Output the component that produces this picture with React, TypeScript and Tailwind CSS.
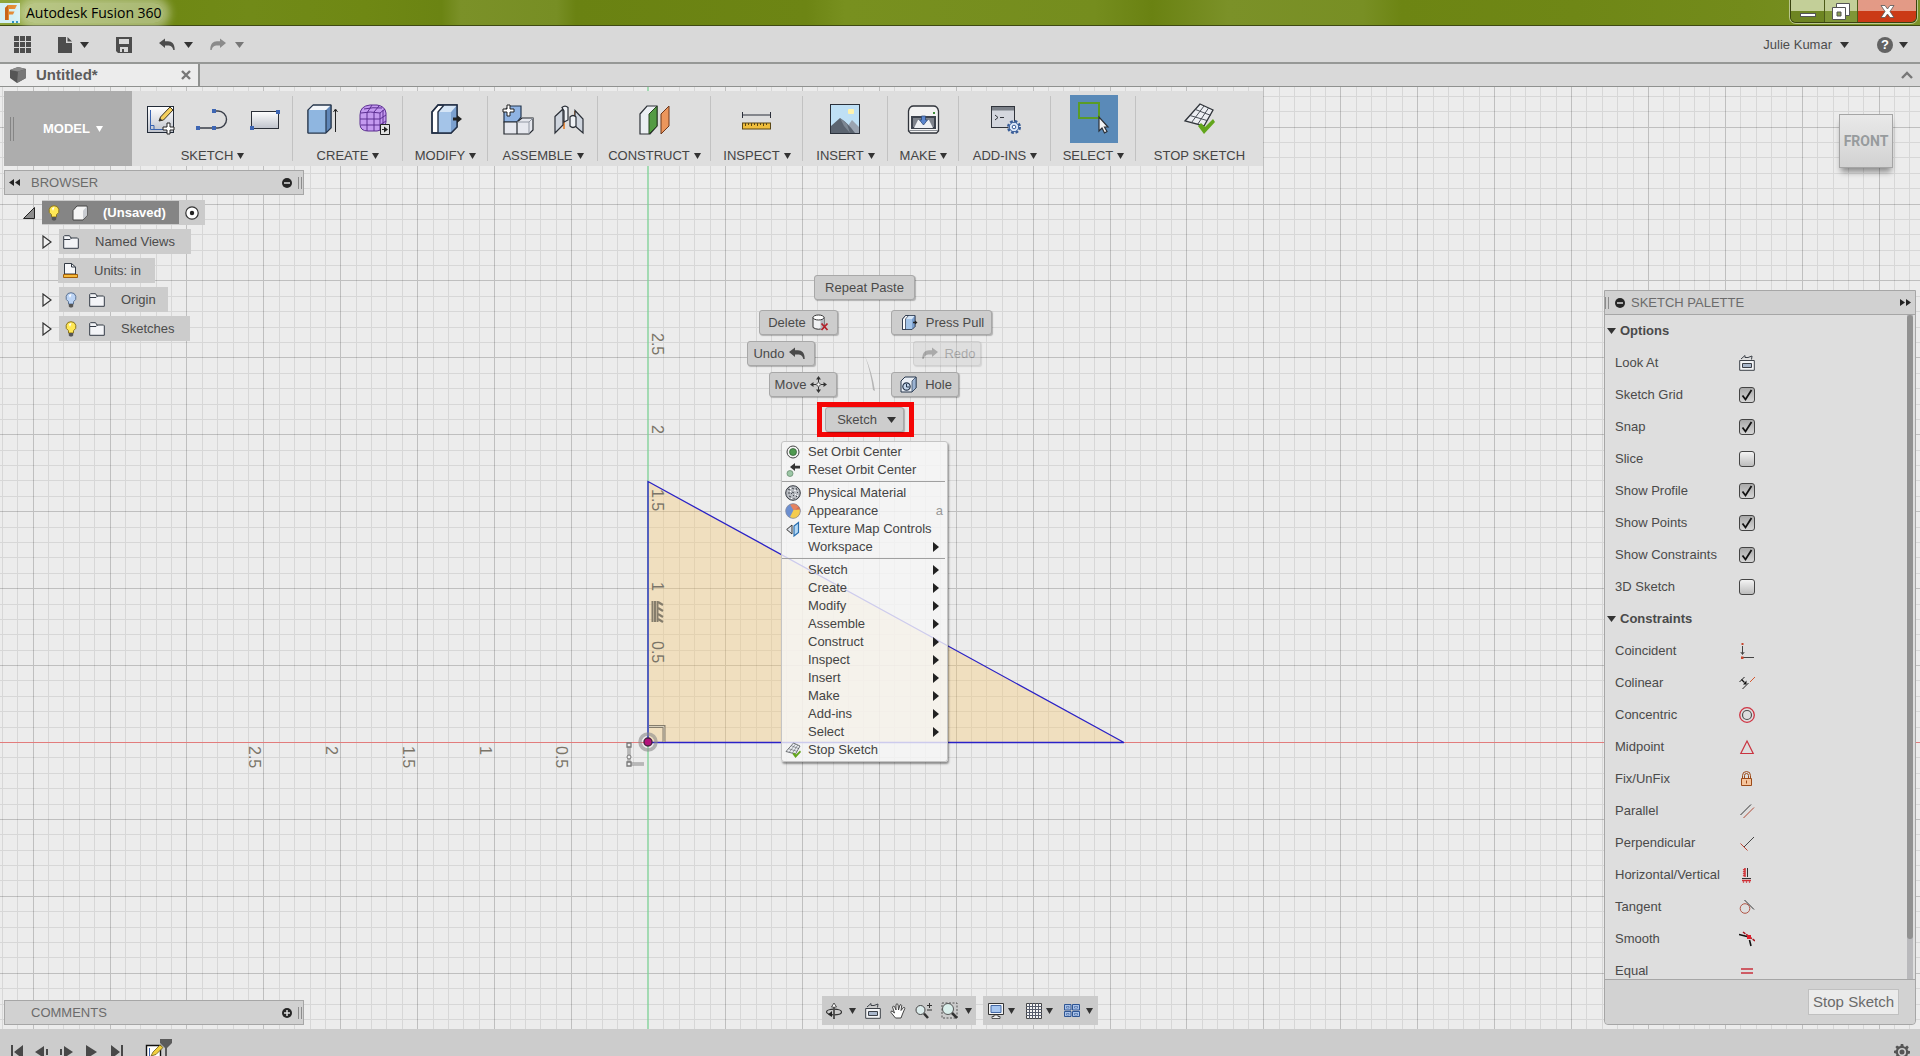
import { useState } from 'react';
import type { ReactNode } from 'react';

// Sketch origin on the canvas and the grid pitch (5 minor cells per major one)
const ORIGIN_X = 648;
const ORIGIN_Y = 655;
const MAJOR = 76.92;
const MINOR = MAJOR / 5;

interface ToolGroup {
  label: string;
  width: string;
  icons: ReactNode[];
  menu?: boolean;
  active?: boolean;
}

interface MenuItem {
  label: string;
  icon?: ReactNode;
  hint?: string;
  submenu?: boolean;
}

function gridPath(step: number, from: number, to: number, skip: (i: number) => boolean) {
  let d = '';
  for (let i = from; i <= to; i++) {
    if (skip(i)) continue;
    d += `M${Math.round(ORIGIN_X + i * step)}.5 0v3000`;
    d += `M0 ${Math.round(ORIGIN_Y + i * step)}.5h4000`;
  }
  return d;
}

const minorLines = gridPath(MINOR, -45, 215, (i) => i % 5 === 0);
const majorLines = gridPath(MAJOR, -9, 43, (i) => i === 0);

const xLabels = [
  { text: '2.5', x: 249 },
  { text: '2', x: 326 },
  { text: '1.5', x: 403 },
  { text: '1', x: 480 },
  { text: '0.5', x: 556 },
];

const yLabels = [
  { text: '2.5', y: 246 },
  { text: '2', y: 338 },
  { text: '1.5', y: 402 },
  { text: '1', y: 495 },
  { text: '0.5', y: 554 },
];

function Caret({ className = 'text-[#333]', small = false }: { className?: string; small?: boolean }) {
  return small ? (
    <svg width="7" height="6" viewBox="0 0 7 6" className={className}>
      <path d="M0 0h7L3.500 6z" fill="currentColor" />
    </svg>
  ) : (
    <svg width="9" height="6" viewBox="0 0 9 6" className={className}>
      <path d="M0 0h9L4.500 6z" fill="currentColor" />
    </svg>
  );
}

function UndoIcon({ flip = false }: { flip?: boolean }) {
  return (
    <svg width="16" height="13" viewBox="0 0 16 13">
      <path
        d="M0 5 6 .5v2.800h3C13 3.300 15.700 6 15.700 12h-1.400C13.500 8.500 11.500 7.500 9 7.500H6V10z"
        fill="currentColor"
        transform={flip ? 'matrix(-1 0 0 1 16 0)' : undefined}
      />
    </svg>
  );
}

function Logo() {
  return (
    <svg width="20" height="20" viewBox="0 0 20 20">
      <rect width="20" height="20" fill="#d4f0f4" />
      <path d="M5 17V5l3-3h9l-2 4H9v2.500h5.500l-1.500 3H9V17z" fill="#e48a33" />
      <path d="M5 17V5l3-3v15z" fill="#c8651a" />
      <path d="M12 18v2h2v-2zM16 18v2h2v-2z" fill="#2b8fc4" />
    </svg>
  );
}

function PencilSketchIcon() {
  return (
    <svg width="34" height="34" viewBox="0 0 34 34">
      <defs>
        <linearGradient id="paper" x1="0" y1="0" x2="0" y2="1">
          <stop offset="0" stopColor="#fff" />
          <stop offset="1" stopColor="#bfc3cc" />
        </linearGradient>
      </defs>
      <rect x="3.500" y="4.500" width="26" height="26" fill="url(#paper)" stroke="#222b38" />
      <path d="M6.500 8v19.500H25M6.500 23.500h3.500v3.500" fill="none" stroke="#3a64b0" />
      <path d="m15 19 1.500-4L26 5l3 3-9.500 10z" fill="#f4cf5d" stroke="#3d3420" />
      <path d="m15 19 1-3 2.500 2.500z" fill="#333" />
      <path d="M23 21h3v4h4v3h-4v4h-3v-4h-4v-3h4z" fill="#fff" stroke="#222" />
    </svg>
  );
}

function ArcIcon() {
  return (
    <svg width="34" height="34" viewBox="0 0 34 34">
      <path d="M3 26h15.500M18 9h4a8.500 8.500 0 0 1 0 17h-4" fill="none" stroke="#3a3f4a" strokeWidth="1.400" />
      <path d="M0 24h4v4H0zM16 24h4v4h-4zM16 7h4v4h-4z" fill="#3e66b3" />
    </svg>
  );
}

function RectIcon() {
  return (
    <svg width="34" height="34" viewBox="0 0 34 34">
      <rect x="3.500" y="9.500" width="27" height="17" fill="url(#paper)" stroke="#2b3038" />
      <path d="M28 8h4v4h-4zM2 24h4v4H2z" fill="#3e66b3" />
    </svg>
  );
}

function ExtrudeIcon() {
  return (
    <svg width="34" height="34" viewBox="0 0 34 34">
      <path d="m3 8 5-5h18v23l-5 5H3z" fill="#f3f6fa" stroke="#27374d" strokeLinejoin="round" />
      <path d="M3 8h18v23H3z" fill="#8fb6e0" />
      <path d="m21 8 5-5v23l-5 5z" fill="#5f86b8" />
      <path d="m3 8 5-5h18v23l-5 5H3zM21 8v23" fill="none" stroke="#27374d" strokeWidth="1.200" />
      <path d="M30.500 30V8M28.500 10l2-3 2 3" fill="none" stroke="#222" />
    </svg>
  );
}

function FormIcon() {
  return (
    <svg width="34" height="34" viewBox="0 0 34 34">
      <path d="M3 13q0-9 10-10h7q8 1 9 8v9q-1 8-9 9h-9q-8 0-8-7z" fill="#c49af0" stroke="#5c2f92" />
      <path
        d="M4 11q9-2 19 0l5-4M3 17h20l6-4M4 23h19l6-4M10 29V11l5-8M17 29V10l5-6M23 28V11M7 7q9-2 18-1M26 25V8"
        fill="none"
        stroke="#5c2f92"
      />
      <path d="M23.500 22.500h9v10h-9z" fill="#e2e2e2" stroke="#222" />
      <path d="M25 27h2v-2.500l4 3-4 3V28h-2z" fill="#222" />
    </svg>
  );
}

function PressPullIcon({ size = 34 }: { size?: number }) {
  return (
    <svg width={size} height={size} viewBox="0 0 34 34">
      <path d="m3 10 6-7h19v22l-6 6H3z" fill="#fff" stroke="#222f45" strokeWidth="1.400" />
      <path d="M9 10h13v21H9z" fill="#a4c4e8" />
      <path d="m9 10 6-7h13l-6 7z" fill="#d5e5f6" />
      <path d="m22 10 6-7v22l-6 6z" fill="#7ba0cf" />
      <path d="m3 10 6-7h19v22l-6 6H3zM9 31V10l6-7" fill="none" stroke="#222f45" strokeWidth="1.400" />
      <path d="M24 15.500h4V13l5 4-5 4v-2.500h-4z" fill="#222" />
    </svg>
  );
}

function ComponentIcon() {
  return (
    <svg width="34" height="34" viewBox="0 0 34 34">
      <path d="m4 9 5-5h12v11l-4 5H4z" fill="#8fb3e3" stroke="#24364f" strokeWidth="1.200" />
      <path d="M4 20h13v12H4zM17 20l5-4h11v12l-4 4H17z" fill="#e6e8ee" stroke="#24282f" strokeWidth="1.200" />
      <path d="M17 20h12v12M29 20l4-4" fill="none" stroke="#9298a3" />
      <path d="M7 3h3v4h4v3h-4v4H7v-4H3V7h4z" fill="#fff" stroke="#222" />
    </svg>
  );
}

function JointIcon() {
  return (
    <svg width="34" height="34" viewBox="0 0 34 34">
      <path d="M12 18v9M23 9v9" stroke="#e57a24" strokeWidth="1.600" />
      <path d="M3 14.500 11 7v16l-8 8z" fill="#cfd5de" stroke="#292e36" strokeWidth="1.200" />
      <path d="M10 5.500q3-3 6 0V18l-4 2V9z" fill="#eef1f5" stroke="#292e36" strokeWidth="1.200" />
      <path d="M23 8.500 31 17v14l-8-7z" fill="#cfd5de" stroke="#292e36" strokeWidth="1.200" />
      <path d="M18 15q3-3 6 0v9q-3 3-6 0z" fill="#eef1f5" stroke="#292e36" strokeWidth="1.200" />
    </svg>
  );
}

function PlanesIcon() {
  return (
    <svg width="34" height="34" viewBox="0 0 34 34">
      <path d="m2 12 7-8h10v20l-7 8H2z" fill="#eceff3" stroke="#2c3036" strokeWidth="1.200" />
      <path d="m11 12 8-8v20l-8 8z" fill="#549b44" stroke="#27421f" />
      <path d="m23 12 8-8v20l-8 8z" fill="#eb965c" stroke="#6e371a" />
    </svg>
  );
}

function RulerIcon() {
  return (
    <svg width="34" height="34" viewBox="0 0 34 34">
      <path d="M2.500 10v6M30.500 10v6M3 13h27" stroke="#2b2f3a" fill="none" />
      <rect x="2.500" y="21" width="28" height="6" fill="#efbd3c" stroke="#5b4714" />
      <path d="M5.500 21v3m3-3v2m3-2v3m3-3v2m3-2v3m3-3v2m3-2v3m3-3v2" stroke="#5b4714" />
    </svg>
  );
}

function ImageIcon() {
  return (
    <svg width="34" height="34" viewBox="0 0 34 34">
      <rect x="1.500" y="2.500" width="29" height="29" fill="#bfe0f5" stroke="#2b313b" />
      <rect x="19" y="7" width="6" height="5" rx="1" fill="#fff3ae" />
      <path d="m14 31 9-13 7 7v6z" fill="#9aa3b0" />
      <path d="m2 24 9-8q8 5 15 15H2z" fill="#5b6470" />
      <path d="m11 16 7 6 3 9-6-7z" fill="#7d8793" />
    </svg>
  );
}

function PrinterIcon() {
  return (
    <svg width="34" height="34" viewBox="0 0 34 34">
      <path d="M1.500 9q1-5 5-5h20q4 0 5 5v20l-2 2h-26l-2-2z" fill="#f2f2f2" stroke="#30343b" strokeWidth="1.300" />
      <path d="M4 14h25v13H4z" fill="#3d434d" />
      <path d="M6 16h21v9H6z" fill="#7d828b" />
      <path d="M11 18h11l4 8H7z" fill="#eef0f3" />
      <path d="M14.500 14h4v4h2l-4 5-4-5h2z" fill="#5b86cf" stroke="#27406c" strokeWidth=".7" />
      <path d="M26 10h2v2h-2z" fill="#3f8c3a" />
      <path d="M2 28.500h29" stroke="#8a8e94" />
    </svg>
  );
}

function ScriptIcon() {
  return (
    <svg width="34" height="34" viewBox="0 0 34 34">
      <rect x="3.500" y="4.500" width="23" height="21" fill="#d4d7de" stroke="#30343b" />
      <path d="M4 5h22v3.500H4z" fill="#7b8088" />
      <path d="m7 13 3 2.500L7 18M12 15.500h4" fill="none" stroke="#30343b" />
      <circle cx="26" cy="25" r="5.500" fill="#e4ecf8" stroke="#385c97" strokeWidth="3" strokeDasharray="2.600 1.700" />
      <circle cx="26" cy="25" r="4.700" fill="#dce7f7" stroke="#385c97" />
      <circle cx="26" cy="25" r="1.800" fill="#fff" stroke="#385c97" />
    </svg>
  );
}

function SelectIcon() {
  return (
    <svg width="48" height="48" viewBox="0 0 48 48">
      <rect x="9" y="8" width="20" height="15" fill="none" stroke="#5a9c27" strokeWidth="2" />
      <path d="M29 22v14l3-3 2.500 5 2.500-1.500-2.500-4.500H38z" fill="#f3f4f6" stroke="#2b2f36" strokeWidth="1.200" />
    </svg>
  );
}

function StopSketchIcon({ size = 34 }: { size?: number }) {
  return (
    <svg width={size} height={size} viewBox="0 0 34 34">
      <path d="m17 2 13 6-9 16L2 19z" fill="#eceef2" stroke="#2f3339" strokeWidth="1.300" />
      <path d="m12.500 7.500 15.500 6M7 13.500l17 5M21 4 8.500 20.500M25.500 6 14.500 22.500" fill="none" stroke="#4a4f57" />
      <path d="m15 24 3-3 4 4 8-8 2 3-11 12z" fill="#62a51c" />
    </svg>
  );
}

function BulbIcon({ on = true }: { on?: boolean }) {
  return (
    <svg width="12" height="16" viewBox="0 0 12 16">
      <path
        d="M6 .7a4.800 4.800 0 0 0-2.500 9V12h5V9.700A4.800 4.800 0 0 0 6 .7z"
        fill={on ? '#ffe855' : '#bcd4f5'}
        stroke={on ? '#8a7420' : '#5d7493'}
      />
      <path d="M4 3.500q1-1.500 2.500-1.300L5 6z" fill="#fff" />
      <path d="M3.800 12h4.400v2.500L7 15.500H5l-1.200-1z" fill="#555" />
    </svg>
  );
}

function FolderIcon() {
  return (
    <svg width="16" height="14" viewBox="0 0 16 14">
      <path d="M.700 13.300V1.500L1.500.700h5L8 3h6.500l.800.800v9.500z" fill="#f3f4f7" stroke="#333a45" />
      <path d="M1 4.500h6L8.500 3" fill="none" stroke="#333a45" />
    </svg>
  );
}

function BodyIcon() {
  return (
    <svg width="16" height="16" viewBox="0 0 16 16">
      <path d="M1 5.500 5 1h10v9.500L11 15H1z" fill="#f5f5f5" stroke="#444" strokeLinejoin="round" />
      <path d="m11 5.500 4-4V10l-4 4.500z" fill="#c9ccd1" />
    </svg>
  );
}

function UnitsIcon() {
  return (
    <svg width="15" height="17" viewBox="0 0 15 17">
      <path d="M1.500 12V1.500h7L12.500 5v7z" fill="#f6f7f9" stroke="#333a45" />
      <path d="M8.500 1.500V5h4" fill="none" stroke="#333a45" />
      <path d="M.500 12.500h14v3H.500z" fill="#f5b93a" stroke="#a15f0b" />
    </svg>
  );
}

function LookAtIcon() {
  return (
    <svg width="16" height="16" viewBox="0 0 16 16">
      <path d="M.700 5.500h14.600v9.800H.700z" fill="#f4f5f7" stroke="#3c4148" />
      <path d="M3.500 8.500h9v4h-9z" fill="#aab8cc" stroke="#3c4148" />
      <path d="m2 4 4-3.500V2.500h3l4-1.500-.500 3.500" fill="none" stroke="#3c4148" />
    </svg>
  );
}

function Collapse({ plus = false }: { plus?: boolean }) {
  return (
    <svg width="10" height="10" viewBox="0 0 10 10">
      <circle cx="5" cy="5" r="5" fill="#262626" />
      <path d={plus ? 'M2 5h6M5 2v6' : 'M2 5h6'} stroke="#ddd" strokeWidth="1.500" />
    </svg>
  );
}

function Grip() {
  return <span className="h-3 w-1 border-x border-[#8c8c8c]" />;
}

const toolGroups: ToolGroup[] = [
  { label: 'SKETCH', width: 'w-[161px]', icons: [<PencilSketchIcon />, <ArcIcon />, <RectIcon />] },
  { label: 'CREATE', width: 'w-[110px]', icons: [<ExtrudeIcon />, <FormIcon />] },
  { label: 'MODIFY', width: 'w-[85px]', icons: [<PressPullIcon />] },
  { label: 'ASSEMBLE', width: 'w-[110px]', icons: [<ComponentIcon />, <JointIcon />] },
  { label: 'CONSTRUCT', width: 'w-[113px]', icons: [<PlanesIcon />] },
  { label: 'INSPECT', width: 'w-[92px]', icons: [<RulerIcon />] },
  { label: 'INSERT', width: 'w-[85px]', icons: [<ImageIcon />] },
  { label: 'MAKE', width: 'w-[71px]', icons: [<PrinterIcon />] },
  { label: 'ADD-INS', width: 'w-[92px]', icons: [<ScriptIcon />] },
  { label: 'SELECT', width: 'w-[85px]', icons: [<SelectIcon />], active: true },
  { label: 'STOP SKETCH', width: 'w-[127px]', icons: [<StopSketchIcon />], menu: false },
];

const menuSections: MenuItem[][] = [
  [
    {
      label: 'Set Orbit Center',
      icon: (
        <svg width="14" height="14" viewBox="0 0 14 14">
          <circle cx="7" cy="7" r="6" fill="#f4f4f4" stroke="#444" />
          <circle cx="7" cy="7" r="3.500" fill="#4f9a50" stroke="#2f5a30" strokeWidth=".7" />
        </svg>
      ),
    },
    {
      label: 'Reset Orbit Center',
      icon: (
        <svg width="14" height="14" viewBox="0 0 14 14">
          <path d="m4 4 5-4v2.800h5v2.700H9V8z" fill="#333" />
          <circle cx="4" cy="10.500" r="3" fill="#9dc7a6" stroke="#5d8466" strokeWidth=".7" />
        </svg>
      ),
    },
  ],
  [
    {
      label: 'Physical Material',
      icon: (
        <svg width="16" height="16" viewBox="0 0 16 16">
          <circle cx="8" cy="8" r="7.300" fill="#b9bcc2" stroke="#33373e" />
          <path d="m3 4 2 1M7 3l2 1M11 3l1 2M3 8h2M7 7l2 1M12 8l1-1M4 11l2 1M8 11l1-1M11 12l1-1M9 13v1M6 9l1-1" stroke="#44484f" />
          <path d="m5 3 1 1M9 5l2 1M5 6l1 1M10 9l1 1M6 13l1 1M12 10l1 1" stroke="#fff" />
        </svg>
      ),
    },
    {
      label: 'Appearance',
      hint: 'a',
      icon: (
        <svg width="16" height="16" viewBox="0 0 16 16">
          <circle cx="8" cy="8" r="7.500" fill="#6c8fd0" />
          <path d="M9 8 5 1.500Q11-1 14 4z" fill="#e5825f" />
          <path d="M9 8l5-4.500Q17 9 13 13.500z" fill="#dd6a48" />
          <path d="M8.500 7 15 6.500Q16 12 11 15q-4 1-6-1z" fill="#f4cc4d" />
          <circle cx="8" cy="8" r="7.300" fill="none" stroke="#8a8a90" strokeWidth=".6" />
        </svg>
      ),
    },
    {
      label: 'Texture Map Controls',
      icon: (
        <svg width="14" height="16" viewBox="0 0 14 16">
          <path d="M.700 8.500 6 4v9z" fill="#dfe3ea" stroke="#333" />
          <path d="M8 5 12.500 1.500v10L8 15z" fill="#b3d8f4" stroke="#2a6fb0" strokeWidth="1.200" />
        </svg>
      ),
    },
    { label: 'Workspace', submenu: true },
  ],
  [
    { label: 'Sketch', submenu: true },
    { label: 'Create', submenu: true },
    { label: 'Modify', submenu: true },
    { label: 'Assemble', submenu: true },
    { label: 'Construct', submenu: true },
    { label: 'Inspect', submenu: true },
    { label: 'Insert', submenu: true },
    { label: 'Make', submenu: true },
    { label: 'Add-ins', submenu: true },
    { label: 'Select', submenu: true },
    { label: 'Stop Sketch', icon: <StopSketchIcon size={17} /> },
  ],
];

const constraints: { label: string; icon: ReactNode }[] = [
  {
    label: 'Coincident',
    icon: (
      <>
        <path d="M3.500 3v8M1.800 9l1.700 2.500L5.200 9M4 14.500h11" stroke="#444" />
        <path d="M2.500 0h2v2h-2zM2 13.500h2.500V16H2z" fill="#c8452c" stroke="none" />
      </>
    ),
  },
  {
    label: 'Colinear',
    icon: (
      <>
        <path d="m.500 7 5-5M3.500 14l6-6" stroke="#222" />
        <path d="m11 7 5-5" stroke="#d4572f" />
        <path d="m2.500 4.500 3 3" stroke="#111" strokeWidth="1.300" />
        <path d="M7.500 9.500H4l3.500-4z" fill="#111" stroke="none" />
      </>
    ),
  },
  {
    label: 'Concentric',
    icon: (
      <>
        <circle cx="8" cy="8" r="7.300" stroke="#cf3342" strokeWidth="1.300" />
        <circle cx="8" cy="8" r="4.500" stroke="#4e4e4e" strokeWidth="1.200" />
      </>
    ),
  },
  { label: 'Midpoint', icon: <path d="m8 2 6.200 12.500H1.800z" stroke="#c93440" strokeWidth="1.200" /> },
  {
    label: 'Fix/UnFix',
    icon: (
      <>
        <path d="M2.500 7.500h10v7h-10z" fill="#f5c49c" stroke="#9c4a18" />
        <path d="M3.500 7.500V4.500a4 4 0 0 1 8 0v3M5.500 7.500v-3a2 2 0 0 1 4 0v3" stroke="#9c4a18" />
        <path d="M7.500 9.500v3" stroke="#9c4a18" />
      </>
    ),
  },
  {
    label: 'Parallel',
    icon: (
      <>
        <path d="M1.500 12 12 1.500" stroke="#333" />
        <path d="M4.500 15 15 4.500" stroke="#b04a35" />
      </>
    ),
  },
  {
    label: 'Perpendicular',
    icon: (
      <>
        <path d="M5 12 15 2" stroke="#444" />
        <path d="m1.500 8.500 7 7" stroke="#bf4432" />
      </>
    ),
  },
  {
    label: 'Horizontal/Vertical',
    icon: (
      <>
        <path d="M8.500 1v9M3 11.500h9" stroke="#333" />
        <path d="M6 1v9M3 13.500h9" stroke="#cf2f35" strokeWidth="1.500" />
        <path d="m4 3 2-1m-2 3 2-1m-2 3 2-1m-2 3 2-1M4 15.500l1-1m2 1 1-1m2 1 1-1" stroke="#cf2f35" strokeWidth="1.200" />
      </>
    ),
  },
  {
    label: 'Tangent',
    icon: (
      <>
        <circle cx="6" cy="9.500" r="4.800" stroke="#b05546" />
        <path d="m5.500 1 9.500 9.500" stroke="#333" />
      </>
    ),
  },
  {
    label: 'Smooth',
    icon: (
      <>
        <path d="m0 3.500 8 2M10.500 9l1.500 6" stroke="#111" strokeWidth="1.600" />
        <path d="m4 1 12 9" stroke="#a5121c" strokeWidth="1.500" strokeDasharray="3 1" />
        <path d="M8 4h4v4H8z" fill="#e01e2b" stroke="none" />
      </>
    ),
  },
  { label: 'Equal', icon: <path d="M2 6h12M2 10h12" stroke="#c9303c" strokeWidth="1.300" /> },
];

function TitleBar() {
  return (
    <header className="flex h-[26px] shrink-0 items-center justify-between border-b border-[#3f4a12] bg-[linear-gradient(90deg,#8fa63c_0%,#6f8814_9%,#718a18_13%,#6f8814_19%,#6b8413_23%,#7b9128_24%,#778e24_29%,#6a8212_30%,#6d8514_42%,#78901f_44%,#758d1e_57%,#6a8212_60%,#7b9128_64%,#788f24_71%,#6d8513_73%,#6f8716_82%,#738b1b_91%,#7b9328_100%)]">
      <div className="flex h-full items-center gap-1">
        <Logo />
        <h1 className="rounded-full bg-white/40 px-0.5 font-['Open_Sans','Noto_Sans',sans-serif] text-sm text-black shadow-[0_0_8px_6px_rgba(255,255,255,0.4)]">
          Autodesk Fusion 360
        </h1>
      </div>
      <div className="mr-[3px] flex h-[23px] self-start overflow-hidden rounded-b-md border border-t-0 border-[#39430f] shadow-[0_0_0_1px_rgba(255,255,255,0.5)]">
        <button aria-label="Minimize" className="flex w-[34px] items-end justify-center border-r border-[#4c5a18] bg-linear-to-b from-[#c3cf98] from-50% to-[#6e8522] to-50% pb-[5px]">
          <span className="h-1 w-4 border border-[#555] bg-white" />
        </button>
        <button aria-label="Restore" className="flex w-[33px] items-center justify-center border-r border-[#4c5a18] bg-linear-to-b from-[#c3cf98] from-50% to-[#7f9636] to-50%">
          <svg width="18" height="17" viewBox="0 0 18 17">
            <path d="M4.500.500h13v12h-13z" fill="#fff" stroke="#555" />
            <path d="M.500 4.500h13v12H.500z" fill="#fff" stroke="#555" />
            <path d="M5 9h4v4H5z" fill="#8a9c50" stroke="#555" />
          </svg>
        </button>
        <button aria-label="Close" className="flex w-[58px] items-center justify-center bg-linear-to-b from-[#e39a86] from-50% to-[#cb3a16] to-50%">
          <svg width="15" height="13" viewBox="0 0 15 13">
            <path d="M1 .500h4l2.500 3.500L10 .500h4l-4 6 4 6h-4L7.500 9 5 12.500H1l4-6z" fill="#fff" stroke="#555" strokeWidth=".8" />
          </svg>
        </button>
      </div>
    </header>
  );
}

function QuickAccess() {
  return (
    <div className="flex h-[38px] shrink-0 items-center justify-between border-b-2 border-[#969896] bg-[#d9d9d9] px-3 pt-px text-[#4d4d4d]">
      <div className="flex items-center gap-[27px] pl-0.5">
        <button aria-label="Data panel">
          <svg width="17" height="17" viewBox="0 0 17 17" fill="currentColor">
            <path d="M0 0h5v5H0zM6 0h5v5H6zM12 0h5v5h-5zM0 6h5v5H0zM6 6h5v5H6zM12 6h5v5h-5zM0 12h5v5H0zM6 12h5v5H6zM12 12h5v5h-5z" />
          </svg>
        </button>
        <button aria-label="File" className="flex items-center gap-2">
          <svg width="14" height="16" viewBox="0 0 14 16" fill="currentColor">
            <path d="M0 0h8v6h6v10H0z" />
            <path d="M9.500 0 14 4.500H9.500z" />
          </svg>
          <Caret />
        </button>
        <button aria-label="Save">
          <svg width="16" height="16" viewBox="0 0 16 16">
            <path d="M0 0h16v16H2l-2-2z" fill="currentColor" />
            <path d="M3 2h10v5H3zM4 10h8v5H4z" fill="#d9d9d9" />
            <path d="M6 12h2v3H6z" fill="currentColor" />
          </svg>
        </button>
        <div className="flex gap-[17px]">
          <button aria-label="Undo" className="flex items-center gap-[9px]">
            <UndoIcon />
            <Caret />
          </button>
          <button aria-label="Redo" className="flex items-center gap-[9px] text-[#8b8b8b]">
            <UndoIcon flip />
            <Caret className="text-[#777]" />
          </button>
        </div>
      </div>
      <div className="flex items-center gap-7">
        <button className="flex items-center gap-2">
          Julie Kumar
          <Caret />
        </button>
        <button aria-label="Help" className="flex items-center gap-1.5">
          <span className="flex size-4 items-center justify-center rounded-full bg-[#636363] text-[13px] font-bold text-white">?</span>
          <Caret />
        </button>
      </div>
    </div>
  );
}

function TabBar() {
  return (
    <div className="flex h-[23px] shrink-0 items-center justify-between border-b border-[#8f918f] bg-[#d9d9d9] pr-[7px]">
      <div className="flex h-full w-[200px] items-center border-r-2 border-[#8f918f] bg-[#ececec] pr-[7px] pl-[10px]">
        <svg width="16" height="16" viewBox="0 0 16 16">
          <path d="M0 3 8 0l8 2v9l-9 5-7-5z" fill="#555" />
          <path d="m0 3 8 1.500L16 2 8 0z" fill="#8a8a8a" />
          <path d="M8 4.500 16 2v9l-9 5z" fill="#777" />
        </svg>
        <span className="ml-[10px] flex-1 text-[15px] font-bold text-[#5c5c5c]">Untitled*</span>
        <button aria-label="Close tab">
          <svg width="10" height="10" viewBox="0 0 10 10">
            <path d="m1 1 8 8M9 1 1 9" stroke="#777" strokeWidth="2.400" />
          </svg>
        </button>
      </div>
      <button aria-label="Collapse">
        <svg width="12" height="8" viewBox="0 0 12 8">
          <path d="m1 7 5-5 5 5" fill="none" stroke="#777" strokeWidth="2.400" />
        </svg>
      </button>
    </div>
  );
}

function Toolbar() {
  return (
    <nav className="flex h-[75px] self-start bg-[#dedede]">
      <button className="flex w-32 items-center bg-[#adadad] pl-1.5 text-[13px] font-bold text-white">
        <span className="h-6 w-1 border-x border-[#858585]" />
        <span className="flex flex-1 items-center justify-center gap-1.5">
          MODEL
          <Caret small className="text-white" />
        </span>
      </button>
      {toolGroups.map((group, i) => (
        <div key={group.label} className={`${group.width} relative flex flex-col items-center`}>
          <div className="flex h-[55px] items-center">
            {group.icons.map((icon, n) => (
              <button
                key={n}
                aria-label={`${group.label} ${n + 1}`}
                className={group.active ? 'flex size-12 bg-[#5a8ab8]' : 'flex w-[52px] justify-center'}
              >
                {icon}
              </button>
            ))}
          </div>
          <button className="flex h-5 items-center gap-1 whitespace-nowrap text-[#444]">
            {group.label}
            {group.menu !== false && <Caret small />}
          </button>
          {i < toolGroups.length - 1 && <span className="absolute top-[5px] right-0 h-[65px] w-px bg-[#c2c2c2]" />}
        </div>
      ))}
    </nav>
  );
}

function TreeArrow() {
  return (
    <svg width="10" height="14" viewBox="0 0 10 14">
      <path d="M1 1v12l8-6z" fill="#f0f0f0" stroke="#333" strokeWidth="1.200" />
    </svg>
  );
}

function Browser() {
  return (
    <section className="mt-1 w-[300px]">
      <div className="flex h-[25px] items-center border border-[#a6a6a6] bg-[#d1d1d1] pr-px pl-1 text-[#6b6b6b]">
        <svg width="11" height="7" viewBox="0 0 11 7">
          <path d="M5 0v7L0 3.500zM11 0v7L6 3.500z" fill="#222" />
        </svg>
        <h2 className="ml-[11px] flex-1">BROWSER</h2>
        <Collapse />
        <span className="ml-1.5 flex">
          <Grip />
        </span>
      </div>
      <ul className="mt-[5px] flex flex-col gap-1 text-[#4b4b4b]">
        <li className="flex h-[25px] items-center pl-[19px]">
          <svg width="12" height="12" viewBox="0 0 12 12">
            <path d="M.500 11.500h11V.500z" fill="#8c8c8c" stroke="#222" />
          </svg>
          <div className="ml-[7px] flex h-full items-center bg-[#cbcbcb]">
            <div className="flex h-[23px] w-[137px] items-center bg-[#858585] pl-[6px] text-white">
              <BulbIcon />
              <span className="ml-3 flex">
                <BodyIcon />
              </span>
              <span className="ml-[15px] font-bold">(Unsaved)</span>
            </div>
            <span className="flex w-[26px] justify-center">
              <svg width="14" height="14" viewBox="0 0 14 14">
                <circle cx="7" cy="7" r="6.200" fill="#fff" stroke="#333" strokeWidth="1.200" />
                <circle cx="7" cy="7" r="2.200" fill="#222" />
              </svg>
            </span>
          </div>
        </li>
        <li className="flex h-[25px] items-center pl-[38px]">
          <TreeArrow />
          <div className="ml-[7px] flex h-full items-center bg-[#cccccc] pr-4 pl-1">
            <FolderIcon />
            <span className="ml-4">Named Views</span>
          </div>
        </li>
        <li className="flex h-[25px] items-center pl-[54px]">
          <div className="flex h-full items-center bg-[#cccccc] pr-[14px] pl-[5px]">
            <UnitsIcon />
            <span className="ml-4">Units: in</span>
          </div>
        </li>
        {[
          { label: 'Origin', on: false, pad: 'pr-3' },
          { label: 'Sketches', on: true, pad: 'pr-4' },
        ].map((node) => (
          <li key={node.label} className="flex h-[25px] items-center pl-[38px]">
            <TreeArrow />
            <div className={`${node.pad} ml-[7px] flex h-full items-center bg-[#cccccc] pl-1.5`}>
              <BulbIcon on={node.on} />
              <span className="ml-3 flex">
                <FolderIcon />
              </span>
              <span className="ml-4">{node.label}</span>
            </div>
          </li>
        ))}
      </ul>
    </section>
  );
}

function Comments() {
  return (
    <section className="flex h-[25px] w-[300px] items-center border border-[#a6a6a6] bg-[#d1d1d1] pr-px pl-[26px] text-[#6b6b6b]">
      <h2 className="flex-1">COMMENTS</h2>
      <Collapse plus />
      <span className="ml-1.5 flex">
        <Grip />
      </span>
    </section>
  );
}

function SketchPalette() {
  const [options, setOptions] = useState([
    { name: 'Sketch Grid', on: true },
    { name: 'Snap', on: true },
    { name: 'Slice', on: false },
    { name: 'Show Profile', on: true },
    { name: 'Show Points', on: true },
    { name: 'Show Constraints', on: true },
    { name: '3D Sketch', on: false },
  ]);

  const toggle = (name: string) => {
    setOptions((prev) => prev.map((o) => (o.name === name ? { ...o, on: !o.on } : o)));
  };

  return (
    <section className="flex min-h-0 flex-1 flex-col rounded-b border border-[#a6a6a6] bg-[#dedede] text-[#4a4a4a]">
      <div className="flex h-6 shrink-0 items-center border-b border-[#a6a6a6] bg-[#d1d1d1] pr-1 text-[#6b6b6b]">
        <Grip />
        <span className="ml-1.5 flex">
          <Collapse />
        </span>
        <h2 className="ml-1.5 flex-1">SKETCH PALETTE</h2>
        <svg width="11" height="7" viewBox="0 0 11 7">
          <path d="M0 0v7l5-3.500zM6 0v7l5-3.500z" fill="#222" />
        </svg>
      </div>
      <div className="flex min-h-0 flex-1 overflow-hidden pr-[2px]">
        <div className="flex-1">
          <h3 className="flex h-8 items-center gap-1 pl-[2px] font-bold">
            <Caret />
            Options
          </h3>
          <button className="flex h-8 w-full items-center pl-[10px] text-left">
            <span className="w-[124px]">Look At</span>
            <LookAtIcon />
          </button>
          {options.map((option) => (
            <label key={option.name} className="flex h-8 items-center pl-[10px]">
              <span className="w-[124px]">{option.name}</span>
              <span className="relative flex">
                <input
                  type="checkbox"
                  checked={option.on}
                  onChange={() => toggle(option.name)}
                  className="size-4 appearance-none rounded-[3px] border border-[#444] bg-linear-to-b from-[#f4f4f4] to-[#bdbdbd] checked:from-[#a9a9a9] checked:to-[#d6d6d6]"
                />
                {option.on && (
                  <svg width="16" height="16" viewBox="0 0 16 16" className="pointer-events-none absolute inset-0">
                    <path d="m3.500 8.500 3 4L12.500 3" fill="none" stroke="#111" strokeWidth="1.800" />
                  </svg>
                )}
              </span>
            </label>
          ))}
          <h3 className="flex h-8 items-center gap-1 pl-[2px] font-bold">
            <Caret />
            Constraints
          </h3>
          {constraints.map((constraint) => (
            <button key={constraint.label} className="flex h-8 w-full items-center pl-[10px] text-left">
              <span className="w-[124px]">{constraint.label}</span>
              <svg width="16" height="16" viewBox="0 0 16 16" fill="none">
                {constraint.icon}
              </svg>
            </button>
          ))}
        </div>
        <div className="w-1.5 bg-[#b9b9bc]">
          <div className="h-[94%] rounded-full bg-[#919191]" />
        </div>
      </div>
      <div className="flex h-[45px] shrink-0 items-center justify-end rounded-b border-t border-[#a6a6a6] bg-[#d2d2d2] pr-4">
        <button className="h-[26px] border border-[#c0c0c0] bg-[#ebebeb] px-1 text-[15px] text-[#6a6a6a]">Stop Sketch</button>
      </div>
    </section>
  );
}

function ViewBar() {
  return (
    <div className="absolute bottom-1 left-1/2 flex -translate-x-1/2 gap-[7px]">
      <div className="flex h-[29px] items-center gap-[9px] bg-[#cbcbcb] px-1">
        <button aria-label="Orbit" className="flex items-center gap-[7px]">
          <svg width="16" height="16" viewBox="0 0 16 16">
            <ellipse cx="8" cy="9" rx="7.500" ry="2.800" fill="none" stroke="#333" strokeWidth="1.200" />
            <path d="M7.500 16V4H5.500L8 0l2.500 4h-2v12z" fill="#fff" stroke="#333" strokeWidth=".8" />
            <path d="m6 8-4 3.500L6 14z" fill="#222" />
          </svg>
          <Caret small />
        </button>
        <button aria-label="Look at">
          <LookAtIcon />
        </button>
        <button aria-label="Pan">
          <svg width="16" height="16" viewBox="0 0 16 16">
            <path
              d="M5.500 15 1 9.500Q.500 8 2 8l2.500 2L2.500 4Q3 2.500 4.500 3.500L6 7V1.500Q7 0 8 1.500L8.500 7 10 2q1.200-1 1.700.300L11 7.500l2.500-3q1.500-.3 1.300 1L12.500 11 11 15z"
              fill="#fff"
              stroke="#333"
              strokeWidth=".9"
            />
          </svg>
        </button>
        <button aria-label="Zoom">
          <svg width="17" height="16" viewBox="0 0 17 16">
            <circle cx="5.500" cy="7" r="4.500" fill="#dcecec" stroke="#444" />
            <path d="m9 10.500 4 4.500" stroke="#333" strokeWidth="2.500" />
            <path d="M14.500 0v5M12 2.500h5M12 7h5" stroke="#333" />
          </svg>
        </button>
        <button aria-label="Fit" className="flex items-center gap-[7px]">
          <svg width="17" height="17" viewBox="0 0 17 17">
            <path d="M1 1h15v15H1z" fill="none" stroke="#555" strokeDasharray="2 1.500" />
            <circle cx="7" cy="7" r="5.500" fill="#d9eeea" stroke="#555" />
            <path d="m11 11 5 5" stroke="#333" strokeWidth="2.600" />
          </svg>
          <Caret small />
        </button>
      </div>
      <div className="flex h-[29px] items-center gap-[11px] bg-[#cbcbcb] px-[5px]">
        <button aria-label="Display" className="flex items-center gap-1">
          <svg width="16" height="16" viewBox="0 0 16 16">
            <path d="M.500.500h15v11H.500z" fill="#f5f5f5" stroke="#333" />
            <path d="M3 2.500h10v7H3z" fill="#a5c5f0" stroke="#4569a5" />
            <path d="M6 12h4v1.500h2v2H4v-2h2z" fill="#eee" stroke="#333" strokeWidth=".8" />
          </svg>
          <Caret small />
        </button>
        <button aria-label="Grid" className="flex items-center gap-1">
          <svg width="16" height="16" viewBox="0 0 16 16">
            <path d="M.500.500h15v15H.500z" fill="#f5f5f5" stroke="#444" />
            <path d="M3.500 0v16M6.500 0v16M9.500 0v16M12.500 0v16M0 3.500h16M0 6.500h16M0 9.500h16M0 12.500h16" stroke="#555b6b" />
          </svg>
          <Caret small />
        </button>
        <button aria-label="Viewports" className="flex items-center gap-1.5">
          <svg width="16" height="13" viewBox="0 0 16 13">
            <path d="M.500.500h6.500V6H.500zM8.500.500h7V6h-7zM.500 7.500h6.500v5H.500zM8.500 7.500h7v5h-7z" fill="#a9c2ea" stroke="#2e5593" />
            <path d="M2.500 2.500H5V4H2.500zM10.500 2.500h3V4h-3zM2.500 9.500H5V11H2.500zM10.500 9.500h3V11h-3z" fill="#d5e2f7" stroke="#2e5593" strokeWidth=".6" />
          </svg>
          <Caret small />
        </button>
      </div>
    </div>
  );
}

function Drawing() {
  return (
    <svg className="absolute inset-0 size-full bg-[#ececec]">
      <path d={minorLines} stroke="#000" strokeOpacity="0.085" shapeRendering="crispEdges" />
      <path d={majorLines} stroke="#000" strokeOpacity="0.19" shapeRendering="crispEdges" />
      <path d="M648 394 1124 655H648z" fill="#f8ca76" fillOpacity="0.38" />
      <path d={`M0 ${ORIGIN_Y}.5H4000`} stroke="#e27c7c" shapeRendering="crispEdges" />
      <path d="M648 0v3000" stroke="#7fd196" strokeOpacity="0.85" strokeWidth="1.600" />
      <path d="M648 394.500 1124 655.500H648z" fill="none" stroke="#2a22c8" strokeWidth="1.300" />
      <g fill="#7a7468" fontSize="16">
        {xLabels.map((l) => (
          <text key={l.text} transform={`translate(${l.x} 659) rotate(90)`}>
            {l.text}
          </text>
        ))}
        {yLabels.map((l) => (
          <text key={l.text} transform={`translate(652 ${l.y}) rotate(90)`}>
            {l.text}
          </text>
        ))}
      </g>
      {/* vertical constraint glyph */}
      <path d="M652.500 514v21M655 514v21M657.500 514v21" stroke="#857d6c" strokeWidth="2" />
      <path d="m658 515 5 3m-5 3 5 3m-5 3 5 3m-5 2 5 3" stroke="#857d6c" strokeWidth="2.200" />
      {/* perpendicular and coincident glyphs */}
      <path d="M649 639.500h15V655" fill="none" stroke="#857d6c" strokeWidth="3" />
      <path d="M649 639.500h15V655" fill="none" stroke="#d8d0bd" />
      <path d="M629 659v18h15" fill="none" stroke="#8b8b8b" strokeWidth="3" />
      <path d="M629 659v18h15" fill="none" stroke="#e3e3e3" />
      <path d="M627 656h4v4h-4zM627 675h4v4h-4z" fill="#eee" stroke="#777" strokeWidth="1.300" />
      <circle cx="629" cy="670" r="2" fill="#eee" stroke="#777" />
      <circle cx="648" cy="655" r="8" fill="none" stroke="#8a8a8a" strokeOpacity="0.6" strokeWidth="3.500" />
      <circle cx="648" cy="655" r="4" fill="#b3137b" stroke="#4a2342" strokeWidth="1.400" />
      {/* pointer trail */}
      <path d="M865 269q7 16 10 35l-2-1q-2-17-8-34z" fill="#b5b5b5" />
    </svg>
  );
}

const radialButton =
  'absolute flex h-[25px] items-center justify-center rounded-[3px] border border-[#a8a8a8] bg-[#cdcdcd] text-[#4a4a4a] shadow-[1px_1px_1px_rgba(0,0,0,0.25)]';

function MarkingMenu() {
  return (
    <>
      <button className={`${radialButton} top-[188px] left-[814px] w-[101px]`}>Repeat Paste</button>
      <button className={`${radialButton} top-[223px] left-[759px] w-[79px] gap-1.5`}>
        Delete
        <svg width="17" height="17" viewBox="0 0 17 17">
          <path d="M1 3.500v10q5.500 3.500 11 0v-10z" fill="#f0f1f3" stroke="#333" />
          <path d="M8.500 5H12v9l-3.500 1.500z" fill="#b5b9c0" />
          <ellipse cx="6.500" cy="3.500" rx="5.500" ry="2.500" fill="#fff" stroke="#333" />
          <path d="m9.500 9.500 6 6.500m0-6.500-6 6.500" stroke="#b3202a" strokeWidth="1.800" />
        </svg>
      </button>
      <button className={`${radialButton} top-[254px] left-[747px] w-[68px] gap-1 pr-1`}>
        Undo
        <UndoIcon />
      </button>
      <button className={`${radialButton} top-[285px] left-[769px] w-[68px] gap-1 pr-1`}>
        Move
        <svg width="17" height="17" viewBox="0 0 17 17" fill="#333">
          <path d="M8.500 0 11 3.500H6zM8.500 17 6 13.500h5zM0 8.500 3.500 6v5zM17 8.500 13.500 11V6z" />
          <path d="M8 3h1v3H8zM8 11h1v3H8zM3 8h3v1H3zM11 8h3v1h-3z" />
          <circle cx="8.500" cy="8.500" r="1.800" fill="#fff" stroke="#333" strokeWidth=".8" />
        </svg>
      </button>
      <button className={`${radialButton} top-[223px] left-[891px] w-[101px] gap-2 pl-0.5`}>
        <PressPullIcon size={17} />
        Press Pull
      </button>
      <button disabled className={`${radialButton} top-[254px] left-[913px] w-[68px] gap-1.5 pl-1 opacity-40`}>
        <UndoIcon flip />
        Redo
      </button>
      <button className={`${radialButton} top-[285px] left-[891px] w-[68px] gap-2 pl-0.5`}>
        <svg width="17" height="17" viewBox="0 0 17 17">
          <path d="M1 5 5 1h11v11l-4 4H1z" fill="#e9eef5" stroke="#27374d" />
          <path d="m12 5 4-4v11l-4 4z" fill="#9db4d3" stroke="#27374d" strokeWidth=".7" />
          <circle cx="6.500" cy="10.500" r="3.700" fill="#c5d8ee" stroke="#27374d" strokeWidth="1.200" />
          <path d="M6.500 8v3h3" fill="none" stroke="#27374d" />
        </svg>
        Hole
      </button>
      <div className="absolute top-[315px] left-[817px] h-[35px] w-[97px] border-[5px] border-[#f50505] bg-[#e6e6e6]" />
      <button className={`${radialButton} top-[320px] left-[825px] w-[79px] gap-[10px] pl-1`}>
        Sketch
        <Caret />
      </button>
    </>
  );
}

function ContextMenu() {
  return (
    <div className="absolute top-[354px] left-[781px] w-[167px] rounded-[3px] border border-[#c4c4c4] bg-[#f6f6f6]/80 pt-px pb-0.5 shadow-[1px_2px_2px_rgba(0,0,0,0.4)]">
      {menuSections.map((section, i) => (
        <ul key={i} className={i > 0 ? 'mt-0.5 mr-0.5 border-t border-[#a0a0a0] pt-0.5' : 'mr-0.5'}>
          {section.map((item) => (
            <li key={item.label}>
              <button className="flex h-[18px] w-full items-center pr-0.5 text-left text-[#444]">
                <span className="flex w-[26px] justify-center pr-1">{item.icon}</span>
                <span className="flex-1 whitespace-nowrap">{item.label}</span>
                {item.hint && <span className="text-[#999]">{item.hint}</span>}
                {item.submenu && (
                  <svg width="11" height="10" viewBox="0 0 11 10">
                    <path d="M1 0v10l6-5z" fill="#222" />
                  </svg>
                )}
              </button>
            </li>
          ))}
        </ul>
      ))}
    </div>
  );
}

function ViewCube() {
  return (
    <div className="mt-[27px] mr-[23px] flex flex-col items-center self-end">
      <button className="size-[54px] border border-[#a5a5a5] bg-linear-to-b from-[#e9e9e9] to-[#d2d2d2] font-[Roboto,sans-serif] text-sm font-bold text-[#979b9d] shadow-[0_6px_6px_-2px_rgba(0,0,0,0.4)]">
        FRONT
      </button>
    </div>
  );
}

function Timeline() {
  return (
    <footer className="flex h-[27px] shrink-0 items-start justify-between overflow-hidden bg-[#cccccc] pr-2 pl-[11px] text-[#484848]">
      <div className="flex gap-3 pt-4">
        <button aria-label="Go to start">
          <svg width="12" height="14" viewBox="0 0 12 14" fill="currentColor">
            <path d="M0 0h2v14H0zM12 0v14L3 7z" />
          </svg>
        </button>
        <button aria-label="Step back">
          <svg width="13" height="14" viewBox="0 0 13 14" fill="currentColor">
            <path d="M9 1v12L0 7zM11 4h2v6h-2z" />
          </svg>
        </button>
        <button aria-label="Step forward">
          <svg width="13" height="14" viewBox="0 0 13 14" fill="currentColor">
            <path d="M0 4h2v6H0zM4 1v12l9-6z" />
          </svg>
        </button>
        <button aria-label="Play">
          <svg width="13" height="14" viewBox="0 0 13 14" fill="currentColor">
            <path d="M1 0v14l11-7z" />
          </svg>
        </button>
        <button aria-label="Go to end">
          <svg width="13" height="14" viewBox="0 0 13 14" fill="currentColor">
            <path d="M1 0v14l9-7zM11 0h2v14h-2z" />
          </svg>
        </button>
      </div>
      <button aria-label="Sketch feature" className="mr-auto ml-[22px] pt-[10px]">
        <svg width="28" height="26" viewBox="0 0 28 26">
          <path d="M1.500 6.500h14v14h-14z" fill="#fff" stroke="#111" strokeWidth="1.400" />
          <path d="M4.500 9v9H14" fill="none" stroke="#3a64b0" />
          <path d="M15 0h12v4l-5 5v16h-2V9l-5-5z" fill="#5b5b5b" />
          <path d="m6 17 2-4 7-7 3 2.500-7 7z" fill="#f2cf3e" stroke="#6b5b1c" strokeWidth=".8" />
        </svg>
      </button>
      <button aria-label="Settings" className="pt-[15px] pr-0.5 text-[#555]">
        <svg width="16" height="16" viewBox="0 0 16 16">
          <path
            d="M6.800 0h2.400l.5 2.200 1.500.7L13.100 1.600l1.700 1.700-1.300 1.900.6 1.500 1.900.4v2.300l-2 .5-.7 1.500 1.200 1.800-1.700 1.700-1.900-1.200-1.500.6L8.900 16H6.800l-.5-2-1.500-.7-1.900 1.200-1.600-1.700 1.200-1.900-.7-1.500L0 9V6.800l2-.5.6-1.500L1.400 3 3 1.400l1.900 1.200 1.500-.6z"
            fill="currentColor"
          />
          <circle cx="8" cy="8" r="3.300" fill="none" stroke="#ccc" strokeWidth="1.600" />
        </svg>
      </button>
    </footer>
  );
}

export default function App() {
  return (
    <div className="flex h-screen flex-col overflow-hidden font-['Liberation_Sans',Arial,sans-serif] text-[13px] leading-4">
      <TitleBar />
      <QuickAccess />
      <TabBar />
      <main className="relative flex min-h-0 flex-1 justify-between overflow-hidden">
        <Drawing />
        <div className="pointer-events-none relative flex flex-col py-1 pl-1 *:pointer-events-auto">
          <Toolbar />
          <Browser />
          <div className="mt-auto">
            <Comments />
          </div>
        </div>
        <div className="relative mr-1 flex w-[312px] flex-col pb-1">
          <ViewCube />
          <div className="mt-[122px] flex min-h-0 flex-1 flex-col">
            <SketchPalette />
          </div>
        </div>
        <MarkingMenu />
        <ContextMenu />
        <ViewBar />
      </main>
      <Timeline />
    </div>
  );
}
